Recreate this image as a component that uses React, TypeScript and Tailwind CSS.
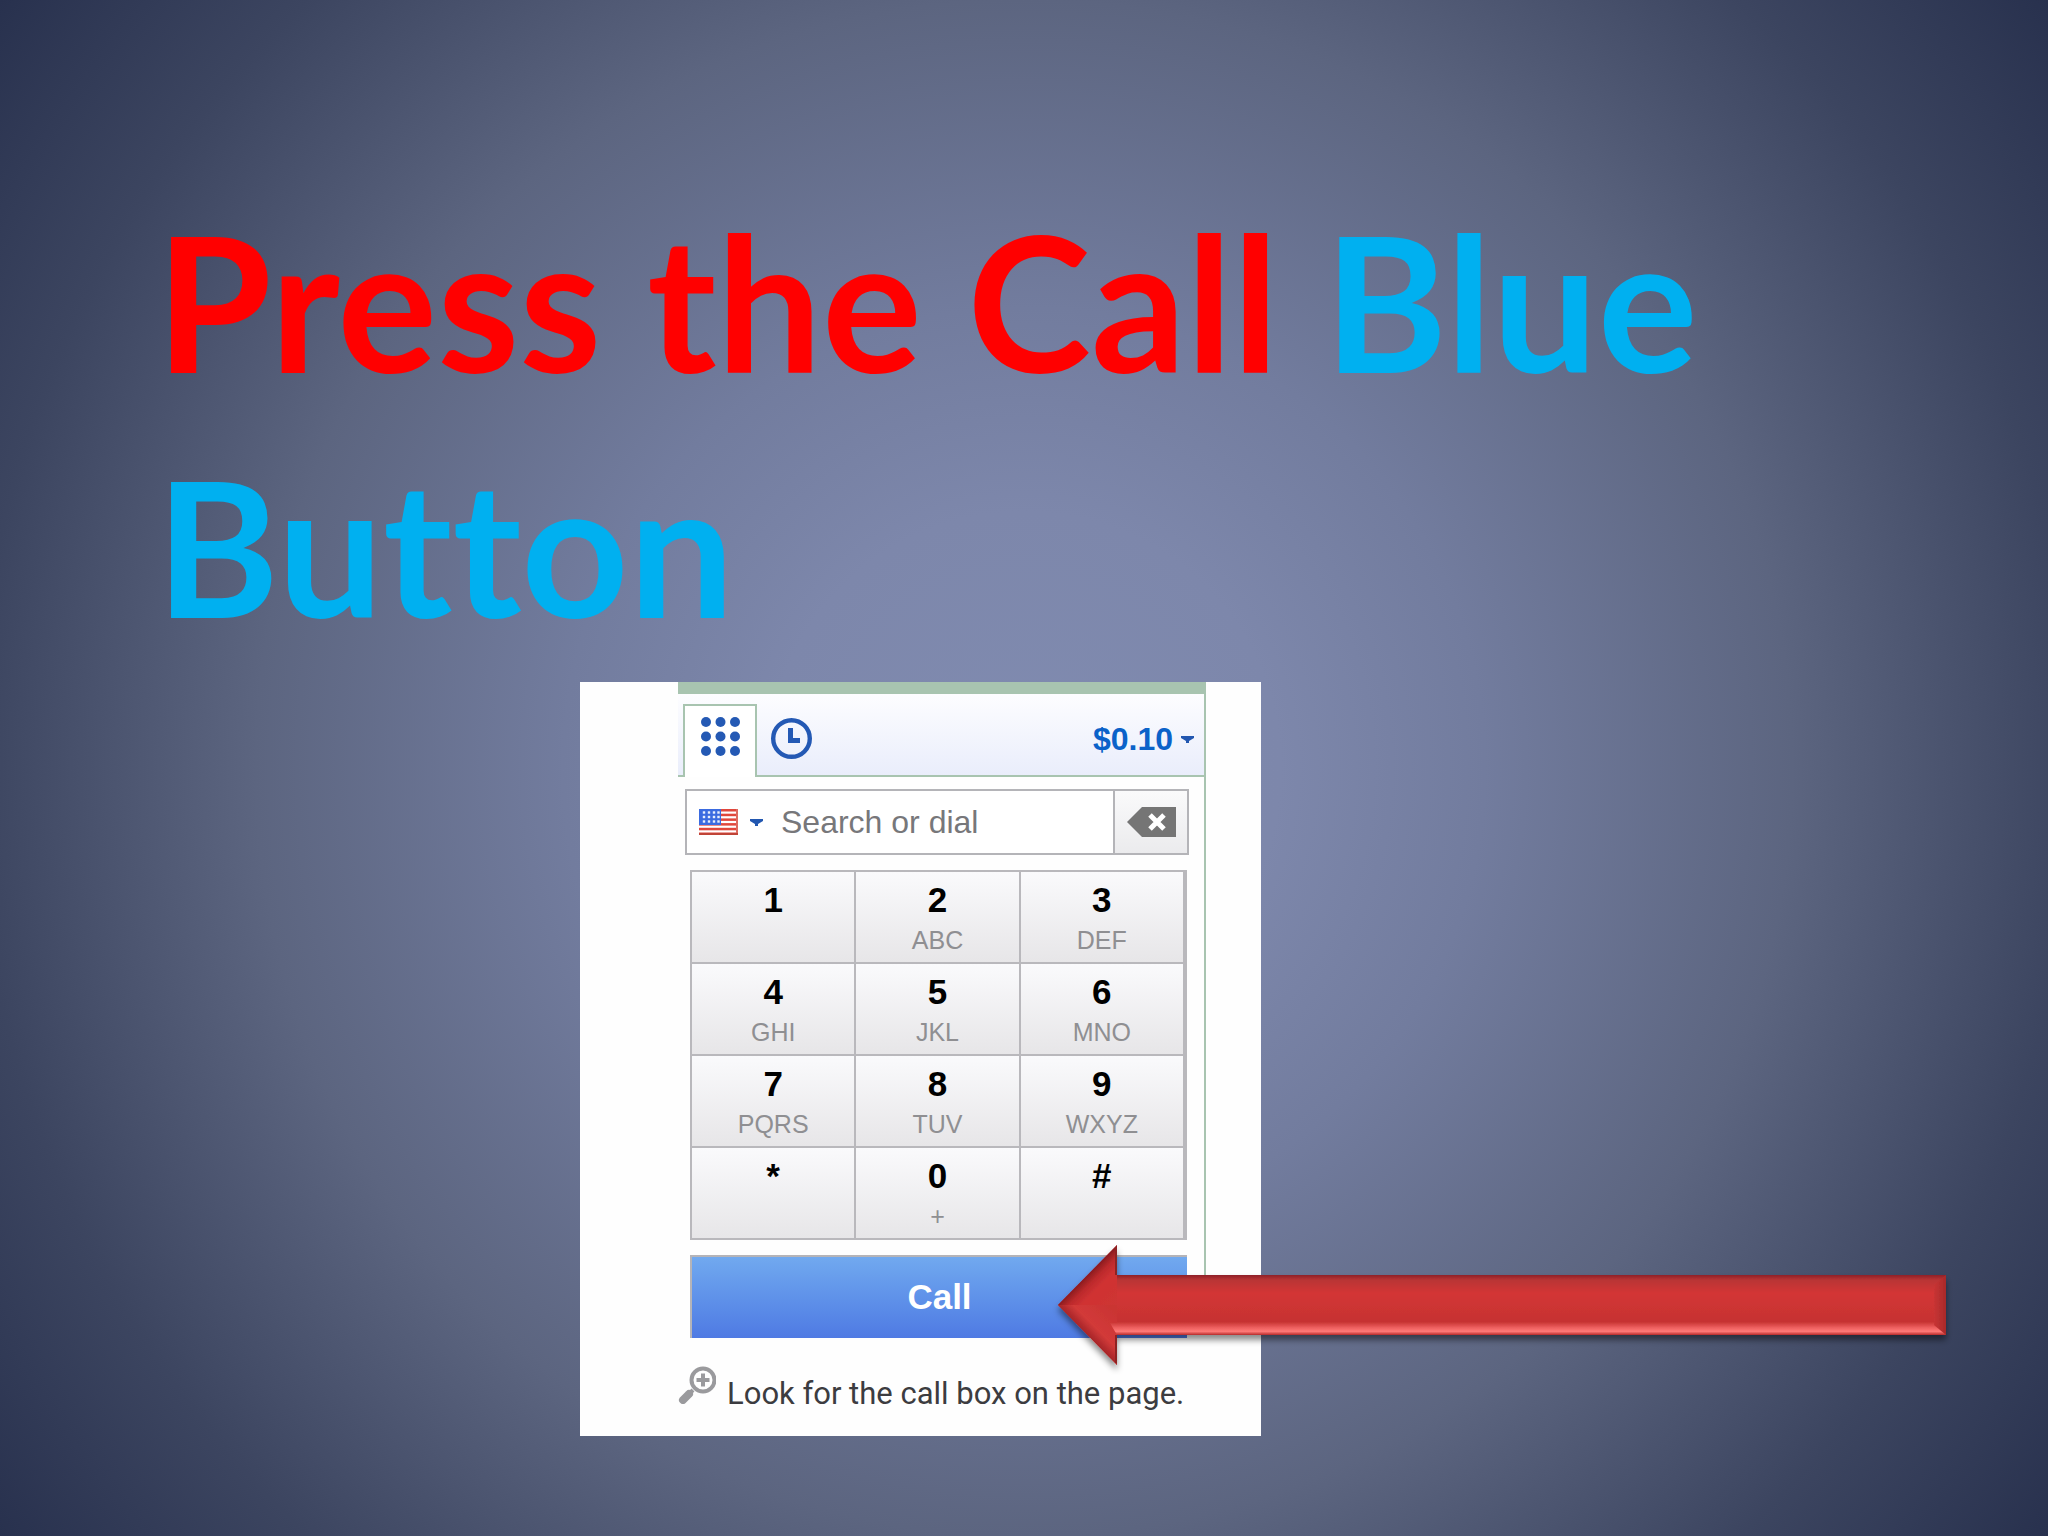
import type { ReactNode } from 'react';

interface DialKey {
    digit: string;
    letters: string;
}

const DIAL_KEYS: DialKey[] = [
    { digit: '1', letters: '' },
    { digit: '2', letters: 'ABC' },
    { digit: '3', letters: 'DEF' },
    { digit: '4', letters: 'GHI' },
    { digit: '5', letters: 'JKL' },
    { digit: '6', letters: 'MNO' },
    { digit: '7', letters: 'PQRS' },
    { digit: '8', letters: 'TUV' },
    { digit: '9', letters: 'WXYZ' },
    { digit: '*', letters: '' },
    { digit: '0', letters: '+' },
    { digit: '#', letters: '' },
];

const Caret = () => (
    <svg viewBox="0 0 13 8" className="h-2 w-[13px]" fill="#2257b0" aria-hidden="true">
        <path d="M0 1h13v2L8 6v2H5V6L0 3z" />
    </svg>
);

const DotsIcon = () => (
    <svg viewBox="0 0 39 39" className="size-[39px]" fill="#2459b4" aria-hidden="true">
        {[5, 19.5, 34].map((cy) =>
            [5, 19.5, 34].map((cx) => <circle key={`${cx}-${cy}`} cx={cx} cy={cy} r="5" />)
        )}
    </svg>
);

const ClockIcon = () => (
    <svg viewBox="0 0 41 41" className="size-[41px]" fill="none" stroke="#2459b4" aria-hidden="true">
        <circle cx="20.5" cy="20.5" r="18.3" strokeWidth="4.4" />
        <path d="M19.5 10v12.5H29" strokeWidth="5" />
    </svg>
);

const FlagIcon = () => (
    <svg viewBox="0 0 39 26" className="h-[26px] w-[39px]" aria-hidden="true">
        <rect width="39" height="26" fill="#fff" />
        {[0, 4.7, 9.4, 14.1, 18.8, 23.5].map((y) => (
            <rect key={y} y={y} width="39" height="2.5" fill="#e0473c" />
        ))}
        <path d="M38 0v26" stroke="#dd6a5f" strokeWidth="2" />
        <rect width="22" height="16" fill="#3b6be0" />
        {[3.5, 8, 12.5].map((y) =>
            [5, 10, 15, 19.5].map((x) => (
                <rect key={`${x}-${y}`} x={x - 1.2} y={y - 1.2} width="2.4" height="2.4" fill="#e8effd" />
            ))
        )}
        <path d="M0 25h39" stroke="#c04437" strokeWidth="2" />
    </svg>
);

const BackspaceIcon = () => (
    <svg viewBox="0 0 49 30" className="h-[30px] w-[49px]" aria-hidden="true">
        <path d="M0 15 15 0h34v30H15z" fill="#757575" />
        <path d="m23 8 14 14m0-14-14 14" stroke="#fff" strokeWidth="5" />
    </svg>
);

const MagnifierIcon = () => (
    <svg viewBox="0 0 38 38" className="size-[38px]" fill="none" stroke="#9a9a9d" aria-hidden="true">
        <circle cx="25" cy="14" r="11.5" strokeWidth="4" />
        <path d="M25 7.5v13M18.5 14h13" strokeWidth="4" />
        <path d="M15 24l-4 4" strokeWidth="4" />
        <path d="M11 28l-6 6" strokeWidth="8" strokeLinecap="round" />
    </svg>
);

// Bevelled arrow that points at the call button
const Arrow = () => (
    <svg viewBox="0 0 888 120" className="h-[120px] w-[888px] overflow-visible" aria-hidden="true">
        <defs>
            <linearGradient id="shaft" x1="0" y1="30" x2="0" y2="90" gradientUnits="userSpaceOnUse">
                <stop offset="0" stopColor="#8f2228" />
                <stop offset="0.08" stopColor="#b83434" />
                <stop offset="0.3" stopColor="#d33636" />
                <stop offset="0.78" stopColor="#c63231" />
                <stop offset="0.88" stopColor="#ee6060" />
                <stop offset="0.94" stopColor="#ff7a78" />
                <stop offset="1" stopColor="#b52a2a" />
            </linearGradient>
            <linearGradient id="headTop" x1="30" y1="30" x2="60" y2="60" gradientUnits="userSpaceOnUse">
                <stop offset="0" stopColor="#8c1c20" />
                <stop offset="0.18" stopColor="#bc2a2c" />
                <stop offset="0.4" stopColor="#d03232" />
                <stop offset="1" stopColor="#cd3534" />
            </linearGradient>
            <linearGradient id="headLow" x1="30" y1="90" x2="55" y2="65" gradientUnits="userSpaceOnUse">
                <stop offset="0" stopColor="#a82628" />
                <stop offset="0.3" stopColor="#d23a39" />
                <stop offset="1" stopColor="#ca3433" />
            </linearGradient>
            <linearGradient id="end" x1="876" y1="0" x2="888" y2="0" gradientUnits="userSpaceOnUse">
                <stop offset="0" stopColor="#c83434" />
                <stop offset="1" stopColor="#a82a2a" />
            </linearGradient>
            <filter id="shadow" x="-5%" y="-20%" width="110%" height="150%">
                <feDropShadow dx="0" dy="5" stdDeviation="3" floodColor="#000" floodOpacity="0.45" />
            </filter>
        </defs>
        <g filter="url(#shadow)">
            <path d="M0 60 59 0v30h829v60H59v30z" fill="#c83232" />
            <path d="M50 30h838v60H59L50 80z" fill="url(#shaft)" />
            <path d="M0 60 59 0v60z" fill="url(#headTop)" />
            <path d="M0 60h59v18h-7l7 12v30z" fill="url(#headLow)" />
            <path d="M888 30v60l-12-10V40z" fill="url(#end)" />
            <path d="M58 2v28M58 90v28" stroke="#8e2024" strokeWidth="2" />
        </g>
    </svg>
);

const Tab = ({ label, children }: { label: string; children: ReactNode }) => (
    <button type="button" aria-label={label} className="flex h-[41px] items-center">
        {children}
    </button>
);

const DialPad = () => (
    <div className="grid grid-cols-3 gap-[2px] border-2 border-r-4 border-[#b9b8bc] bg-[#b9b8bc]">
        {DIAL_KEYS.map(({ digit, letters }) => (
            <button
                key={digit}
                type="button"
                className="flex h-[90px] flex-col items-center bg-linear-to-b from-[#fafafc] to-[#e7e6e8] pt-2"
            >
                <span className="text-[35px] leading-10 font-bold text-black">{digit}</span>
                <span className="text-[25px] leading-10 text-[#8f8f92]">{letters}</span>
            </button>
        ))}
    </div>
);

const Dialer = () => (
    <section className="w-[528px] font-['Liberation_Sans',Arial,sans-serif]">
        <div className="border-r-2 border-[#a8c4b0]">
            <div className="h-3 bg-[#a8c4b0]" />
            <div className="flex h-[83px] items-stretch bg-linear-to-b from-[#fdfdff] to-[#e9edfb]">
                <div className="w-[5px] border-b-2 border-[#a8c4b0]" />
                <div className="mt-[10px] flex w-[74px] items-start justify-center border-2 border-b-0 border-[#a8c4b0] bg-white pt-[10px]">
                    <Tab label="Keypad">
                        <DotsIcon />
                    </Tab>
                </div>
                <div className="flex flex-1 items-center justify-between border-b-2 border-[#a8c4b0] pt-2 pr-[10px] pl-[14px]">
                    <Tab label="History">
                        <ClockIcon />
                    </Tab>
                    <button type="button" className="flex items-center gap-2 text-[32px] leading-10 font-bold text-[#0b62c9]">
                        $0.10
                        <Caret />
                    </button>
                </div>
            </div>
            <div className="pt-3 pr-[15px] pl-[7px]">
                <div className="flex h-[66px] border-2 border-[#b4b4b8] bg-white">
                    <button type="button" aria-label="Country" className="flex items-center gap-3 pl-3">
                        <FlagIcon />
                        <Caret />
                    </button>
                    <input
                        type="text"
                        aria-label="Search or dial"
                        placeholder="Search or dial"
                        className="min-w-0 flex-1 px-[18px] text-[32px] text-[#77777a] outline-none placeholder:text-[#77777a]"
                    />
                    <button
                        type="button"
                        aria-label="Delete"
                        className="flex w-[74px] items-center justify-center border-l-2 border-[#b4b4b8] bg-linear-to-b from-[#fafafb] to-[#ebebed]"
                    >
                        <BackspaceIcon />
                    </button>
                </div>
            </div>
            <div className="h-[420px] pt-[15px] pr-[17px] pl-3">
                <DialPad />
            </div>
        </div>
        <div className="-mt-5 pr-[19px] pl-3">
            <button
                type="button"
                className="h-[83px] w-full border-t-2 border-l-2 border-[#b5b4b8] bg-linear-to-b from-[#71a9ef] to-[#4f7ae3] text-[35px] font-bold text-white"
            >
                Call
            </button>
        </div>
        <p className="flex items-start gap-[11px] pt-7 font-[Roboto,sans-serif] text-[31px] leading-[56px] whitespace-nowrap text-[#3c3c40]">
            <MagnifierIcon />
            Look for the call box on the page.
        </p>
    </section>
);

export default function App() {
    return (
        <main className="min-h-screen bg-[radial-gradient(circle_farthest-corner,#808bb0_0%,#7d87ab_20%,#727c9e_36%,#5c6580_60%,#3c4560_82%,#28314e_100%)]">
            <h1 className="px-[156px] pt-[178px] pb-[14px] font-[Lato,sans-serif] text-[187px] leading-[245px] font-bold text-[#00b0f0] [font-variant-ligatures:none]">
                <span className="text-[#ff0000]">Press the Call</span> Blue
                <br />
                Button
            </h1>
            <div className="relative ml-[580px] w-[681px] bg-[#fefefe] pr-[55px] pb-[14px] pl-[98px]">
                <Dialer />
                <div className="absolute top-[563px] left-[478px]">
                    <Arrow />
                </div>
            </div>
        </main>
    );
}
